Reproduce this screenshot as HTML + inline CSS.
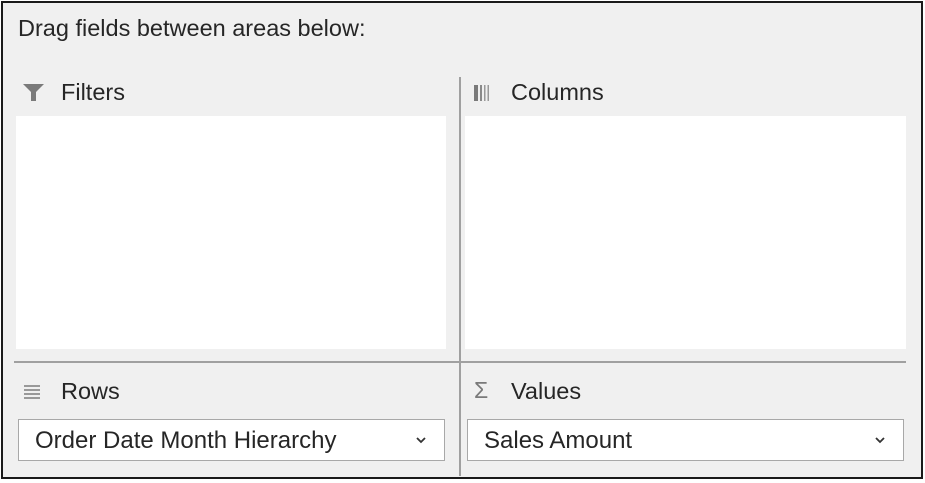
<!DOCTYPE html>
<html><head><meta charset="utf-8"><style>
body{margin:0;width:925px;height:483px;background:#fff;overflow:hidden;font-family:"Liberation Sans",sans-serif;}
.frame{position:absolute;left:1px;top:1px;width:918px;height:474px;border:2px solid #1a1a1a;background:#f0f0f0;}
.t{position:absolute;color:#262626;font-size:23.5px;white-space:nowrap;}
.box{position:absolute;background:#fff;}
.dd{position:absolute;background:#fff;border:1px solid #a8a8a8;box-sizing:border-box;height:42px;}
.dd span{position:absolute;left:16px;top:7px;font-size:24px;color:#262626;}
.dd svg{position:absolute;right:18px;top:17px;}
</style></head><body>
<div class="frame"></div>
<div class="t" style="left:18px;top:15px;font-size:23.5px;">Drag fields between areas below:</div>
<svg style="position:absolute;left:23px;top:84px" width="22" height="18"><path d="M0 0H21L13 8V17H8V8Z" fill="#7a7a7a"/></svg>
<div class="t" style="left:61px;top:79px;">Filters</div>
<svg style="position:absolute;left:474px;top:85px" width="20" height="16"><rect x="0" y="0" width="4" height="16" fill="#7a7a7a"/><rect x="6" y="0" width="2" height="16" fill="#8a8a8a"/><rect x="10" y="0" width="1.5" height="16" fill="#999"/><rect x="13.5" y="0" width="1.5" height="16" fill="#999"/></svg>
<div class="t" style="left:511px;top:79px;">Columns</div>
<div class="box" style="left:16px;top:116px;width:430px;height:233px;"></div>
<div class="box" style="left:465px;top:116px;width:441px;height:233px;"></div>
<div style="position:absolute;left:459px;top:77px;width:2px;height:399px;background:#a0a0a0;"></div>
<div style="position:absolute;left:14px;top:361px;width:892px;height:2px;background:#a0a0a0;"></div>
<svg style="position:absolute;left:24px;top:385px" width="18" height="14"><g fill="#999"><rect y="0" width="16" height="2"/><rect y="4" width="16" height="2"/><rect y="8" width="16" height="2"/><rect y="12" width="16" height="2"/></g></svg>
<div class="t" style="left:61px;top:378px;">Rows</div>
<div class="t" style="left:474px;top:377px;color:#7a7a7a;font-size:23px;">Σ</div>
<div class="t" style="left:511px;top:378px;">Values</div>
<div class="dd" style="left:18px;top:419px;width:427px;"><span>Order Date Month Hierarchy</span><svg width="10" height="7"><path d="M1 1L5 5L9 1" stroke="#333" stroke-width="1.8" fill="none"/></svg></div>
<div class="dd" style="left:467px;top:419px;width:437px;"><span>Sales Amount</span><svg width="10" height="7"><path d="M1 1L5 5L9 1" stroke="#333" stroke-width="1.8" fill="none"/></svg></div>
</body></html>
